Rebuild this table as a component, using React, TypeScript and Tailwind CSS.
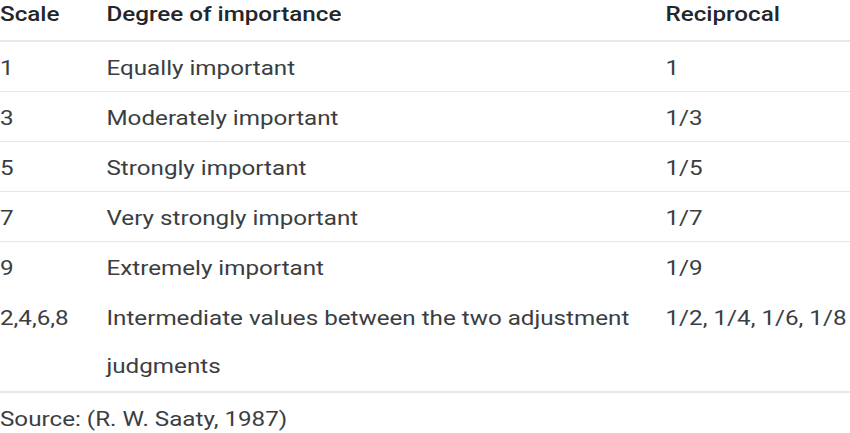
import React from "react";

const rows: [string, string, string][] = [
  ["1", "Equally important", "1"],
  ["3", "Moderately important", "1/3"],
  ["5", "Strongly important", "1/5"],
  ["7", "Very strongly important", "1/7"],
  ["9", "Extremely important", "1/9"],
];

export default function App() {
  return (
    <div className="w-[850px] h-[433px] overflow-hidden bg-white">
      <div
        className="w-[703px] origin-top-left scale-x-[1.21] text-[20px] text-[#3a3e42]"
        style={{ fontFamily: "Roboto, 'Noto Sans', sans-serif" }}
      >
        <div className="grid grid-cols-[88px_462px_1fr] h-[42px] items-start leading-[28px] font-medium text-[#23272b] border-b-2 border-[#ece6e9]">
          <div>Scale</div>
          <div>Degree of importance</div>
          <div>Reciprocal</div>
        </div>
        {rows.map((r, i) => (
          <div
            key={i}
            className={
              "grid grid-cols-[88px_462px_1fr] h-[50px] items-center leading-[48px] pt-[2px] " +
              (i < 4 ? "border-b border-[#e6e6e6]" : "")
            }
          >
            <div>{r[0]}</div>
            <div>{r[1]}</div>
            <div>{r[2]}</div>
          </div>
        ))}
        <div className="grid grid-cols-[88px_462px_1fr] h-[101px] items-start pt-[2px] leading-[48px] border-b-2 border-[#ece6e9] whitespace-nowrap">
          <div>2,4,6,8</div>
          <div>
            Intermediate values between the two adjustment
            <br />
            judgments
          </div>
          <div>1/2, 1/4, 1/6, 1/8</div>
        </div>
        <div className="h-[40px] pt-[12px] leading-[28px]">Source: (R. W. Saaty, 1987)</div>
      </div>
    </div>
  );
}
